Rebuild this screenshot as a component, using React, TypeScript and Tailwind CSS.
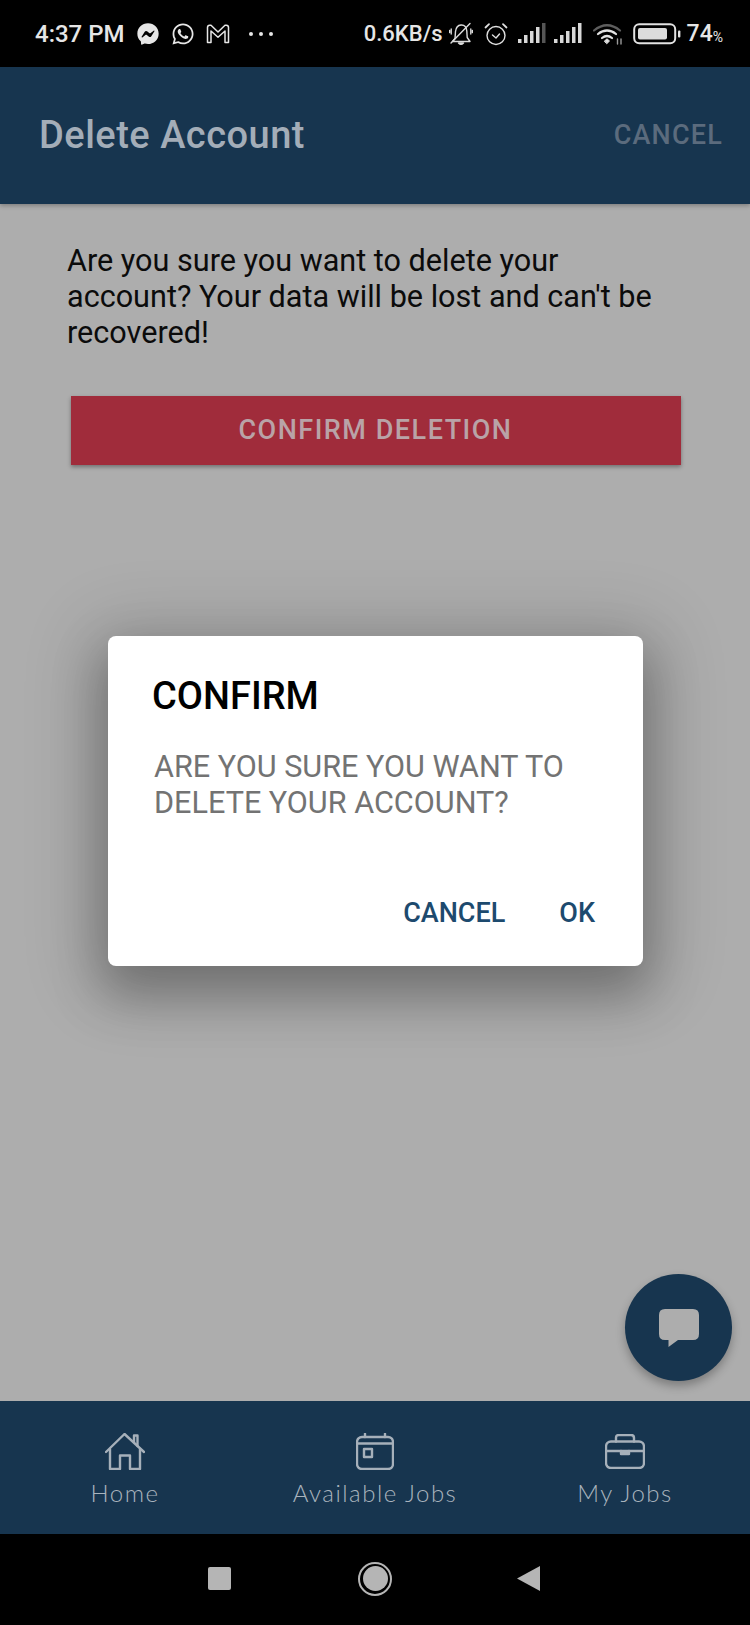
import React from "react";
import { FaFacebookMessenger, FaWhatsapp } from "react-icons/fa";

const roboto = "font-['Roboto',sans-serif]";

function Gmail() {
  return (
    <svg width="24" height="20" viewBox="0 0 24 20" fill="none" stroke="#e6e6e6" strokeWidth="1.5" strokeLinejoin="round">
      <path d="M1.5 3.5 Q1.5 1.2 3.6 1.2 L5 1.2 L12 8 L19 1.2 L20.4 1.2 Q22.5 1.2 22.5 3.5 L22.5 18.5 L19 18.5 L19 7 L12 13.2 L5 7 L5 18.5 L1.5 18.5 Z" />
    </svg>
  );
}

function BellOff() {
  return (
    <svg width="24" height="24" viewBox="0 0 24 24" fill="none" stroke="#dcdcdc" strokeWidth="1.4" strokeLinecap="round" strokeLinejoin="round">
      <path d="M3.5 19.5 L6 16.5 L6.5 9.5 C7 5 9.5 3.2 12 3 C15.5 2.8 17.5 5.5 17.8 9 L18.2 15.5 L21 19.5 Z" />
      <path d="M9.5 21 Q12 23.5 14.5 21 Z" fill="#dcdcdc" />
      <path d="M2 21 L21 1.5" />
      <path d="M2.2 7 L2.2 12 M0.6 8.5 L0.6 10.5 M21.8 7 L21.8 12 M23.4 8.5 L23.4 10.5" />
    </svg>
  );
}

function Alarm() {
  return (
    <svg width="24" height="24" viewBox="0 0 24 24" fill="none" stroke="#e0e0e0" strokeWidth="1.4" strokeLinecap="round" strokeLinejoin="round">
      <circle cx="12" cy="13.5" r="9" />
      <path d="M8.5 13 L12 16 L15.5 12" />
      <path d="M1.5 5.5 L5 2.2 M22.5 5.5 L19 2.2" strokeWidth="1.8" />
    </svg>
  );
}

function Signal({ dim }: { dim?: boolean }) {
  return (
    <svg width="28" height="21" viewBox="0 0 28 21" fill="#d8d8d8">
      <rect x="0" y="16" width="3.5" height="4" />
      <rect x="6" y="12" width="3.5" height="8" />
      <rect x="12" y="8" width="3.5" height="12" />
      <rect x="18" y="4" width="3.5" height="16" />
      <rect x="24" y="0" width="3.5" height="20" fill={dim ? "#555555" : "#d8d8d8"} />
    </svg>
  );
}

function Wifi() {
  return (
    <svg width="30" height="22" viewBox="0 0 30 22" fill="none" strokeLinecap="round">
      <path d="M1 7.5 Q14 -3 27 7.5" stroke="#5e5e5e" strokeWidth="2.2" />
      <path d="M5 11 Q14 4 23 11" stroke="#e2e2e2" strokeWidth="2.2" />
      <path d="M9 15 Q14 11 19 15" stroke="#e2e2e2" strokeWidth="2.2" />
      <path d="M11.5 18 L14 15.8 L16.5 18 L14 20.5 Z" fill="#e2e2e2" stroke="#e2e2e2" strokeWidth="1" />
      <path d="M24.5 16 L24.5 21 M28 16 L28 21" stroke="#9a9a9a" strokeWidth="1.4" />
    </svg>
  );
}

function Battery() {
  return (
    <svg width="48" height="22" viewBox="0 0 48 22" fill="none">
      <rect x="1.2" y="1.2" width="41" height="19" rx="5" stroke="#e2e2e2" strokeWidth="2" />
      <rect x="5" y="5" width="29" height="11.5" rx="2" fill="#dcdcdc" />
      <rect x="45" y="7.5" width="2.4" height="7" rx="1" fill="#e2e2e2" />
    </svg>
  );
}

function HomeIcon() {
  return (
    <svg width="40" height="37" viewBox="0 0 40 37" fill="none" stroke="#a6b0ba" strokeWidth="2.4" strokeLinejoin="round" strokeLinecap="round">
      <path d="M1 19 L19.5 1 L39 19" />
      <path d="M29 9 L29 2.5 L32.5 2.5 L32.5 13" />
      <path d="M5 16 L5 36 L15 36 L15 22.5 L25 22.5 L25 36 L35 36 L35 16" />
    </svg>
  );
}

function CalendarIcon() {
  return (
    <svg width="38" height="37" viewBox="0 0 38 37" fill="none" stroke="#a6b0ba" strokeWidth="2.4" strokeLinecap="round" strokeLinejoin="round">
      <rect x="1" y="4" width="36" height="32" rx="5" />
      <path d="M9 0.8 L9 4 M29 0.8 L29 4 M1 10.5 L37 10.5" />
      <rect x="8" y="16" width="8" height="8" />
    </svg>
  );
}

function BriefcaseIcon() {
  return (
    <svg width="40" height="35" viewBox="0 0 40 35" fill="none" stroke="#a6b0ba" strokeWidth="2.4" strokeLinecap="round" strokeLinejoin="round">
      <rect x="1" y="7.5" width="38" height="26.5" rx="5" />
      <path d="M11 7.5 L11 4 Q11 1 14 1 L26 1 Q29 1 29 4 L29 7.5" />
      <path d="M1 17 L39 17" />
      <path d="M16 17 L16 20 L24 20 L24 17" fill="#a6b0ba" />
    </svg>
  );
}

function NavItem({ icon, label }: { icon: React.ReactNode; label: string }) {
  return (
    <div className="flex-1 flex flex-col items-center">
      <div className="h-[37px] flex items-center justify-center">{icon}</div>
      <div className="mt-[8px] text-[24px] leading-[30px] tracking-[1.5px] font-light text-[#a9b3bd] font-['Lato',sans-serif]">{label}</div>
    </div>
  );
}

export default function App() {
  return (
    <div className={`relative w-[750px] h-[1625px] overflow-hidden flex flex-col bg-[#adadad] ${roboto}`}>
      {/* status bar */}
      <div className="h-[67px] shrink-0 bg-black flex items-center justify-between pl-[35px] pr-[27px] text-[#e6e6e6]">
        <div className="flex items-center">
          <span className="text-[24px] font-medium leading-none w-[89px] whitespace-nowrap">4:37 PM</span>
          <FaFacebookMessenger className="ml-[13px] text-[22px] text-[#e6e6e6]" />
          <FaWhatsapp className="ml-[12px] text-[24px] text-[#e6e6e6]" />
          <span className="ml-[11px]"><Gmail /></span>
          <span className="ml-[19px] flex gap-[6px]">
            <i className="block w-[4px] h-[4px] rounded-full bg-[#e6e6e6]" />
            <i className="block w-[4px] h-[4px] rounded-full bg-[#e6e6e6]" />
            <i className="block w-[4px] h-[4px] rounded-full bg-[#e6e6e6]" />
          </span>
        </div>
        <div className="flex items-center">
          <span className="text-[22px] font-medium leading-none whitespace-nowrap">0.6KB/s</span>
          <span className="ml-[6px]"><BellOff /></span>
          <span className="ml-[11px]"><Alarm /></span>
          <span className="ml-[10px]"><Signal dim /></span>
          <span className="ml-[8px]"><Signal /></span>
          <span className="ml-[11px]"><Wifi /></span>
          <span className="ml-[10px]"><Battery /></span>
          <span className="ml-[6px] text-[23px] font-medium leading-none">74</span>
          <span className="text-[14px] leading-none mt-[6px]">%</span>
        </div>
      </div>

      {/* header */}
      <div className="h-[137px] shrink-0 bg-[#17354f] flex items-center justify-between pl-[39px] pr-[27px] shadow-[0_2px_4px_rgba(0,0,0,0.25)] z-10">
        <span className="text-[38px] leading-[44px] -mt-[2px] font-medium text-[#a3adb8] tracking-[0.5px] whitespace-nowrap">Delete Account</span>
        <span className="text-[27px] leading-[32px] -mt-[1px] font-medium text-[#5b6b7d] tracking-[1.2px]">CANCEL</span>
      </div>

      {/* body */}
      <div className="flex-1 pl-[67px] pr-[70px] pt-[39px]">
        <p className="text-[30.6px] leading-[36px] text-[#0b0b0b]">
          Are you sure you want to delete your account? Your data will be lost and can't be recovered!
        </p>
        <div className="mt-[45px] ml-[3.5px] w-[610px] h-[69px] bg-[#a02c3b] flex items-center justify-center shadow-[0_2px_4px_rgba(0,0,0,0.35)]">
          <span className="text-[27px] font-medium tracking-[1.5px] text-[#b9a3a7]">CONFIRM DELETION</span>
        </div>
      </div>

      {/* bottom nav */}
      <div className="h-[133px] shrink-0 bg-[#17354f] flex items-start pt-[32px]">
        <NavItem icon={<HomeIcon />} label="Home" />
        <NavItem icon={<CalendarIcon />} label="Available Jobs" />
        <NavItem icon={<BriefcaseIcon />} label="My Jobs" />
      </div>

      {/* android nav */}
      <div className="h-[91px] shrink-0 bg-black flex items-center justify-center">
        <div className="flex items-center -mt-[2px] -ml-[2px]">
          <div className="w-[23px] h-[23px] rounded-[2px] bg-[#b5b5b5]" />
          <div className="ml-[127px] w-[34px] h-[34px] rounded-full border-[2px] border-[#b5b5b5] flex items-center justify-center">
            <div className="w-[25px] h-[25px] rounded-full bg-[#b5b5b5]" />
          </div>
          <svg className="ml-[125px]" width="23" height="25" viewBox="0 0 23 25" fill="#b5b5b5">
            <path d="M23 0 L23 25 L0 12.5 Z" />
          </svg>
        </div>
      </div>

      {/* floating chat button */}
      <div className="absolute left-[625px] top-[1274px] w-[107px] h-[107px] rounded-full bg-[#17354f] shadow-[0_5px_10px_rgba(0,0,0,0.28)] flex items-center justify-center">
        <svg className="ml-[1px]" width="40" height="38" viewBox="0 0 40 38" fill="#adadad">
          <path d="M6 0 L34 0 Q40 0 40 6 L40 25 Q40 31 34 31 L19 31 L9.5 38 L9.5 31 L6 31 Q0 31 0 25 L0 6 Q0 0 6 0 Z" />
        </svg>
      </div>

      {/* dialog */}
      <div className="absolute left-[108px] top-[636px] w-[535px] h-[330px] bg-white rounded-[8px] shadow-[0_24px_50px_6px_rgba(0,0,0,0.26),0_8px_70px_20px_rgba(0,0,0,0.14)] flex flex-col pl-[44px] pr-[48px]">
        <div className="mt-[37px] text-[38px] leading-[46px] font-medium text-black">CONFIRM</div>
        <div className="mt-[30px] ml-[2px] text-[30.6px] leading-[36px] text-[#737373] font-normal">
          ARE YOU SURE YOU WANT TO DELETE YOUR ACCOUNT?
        </div>
        <div className="mt-auto mb-[36px] flex justify-end items-center gap-[54px] text-[27px] leading-[34px] font-medium text-[#1d4a6e]">
          <span>CANCEL</span>
          <span>OK</span>
        </div>
      </div>
    </div>
  );
}
